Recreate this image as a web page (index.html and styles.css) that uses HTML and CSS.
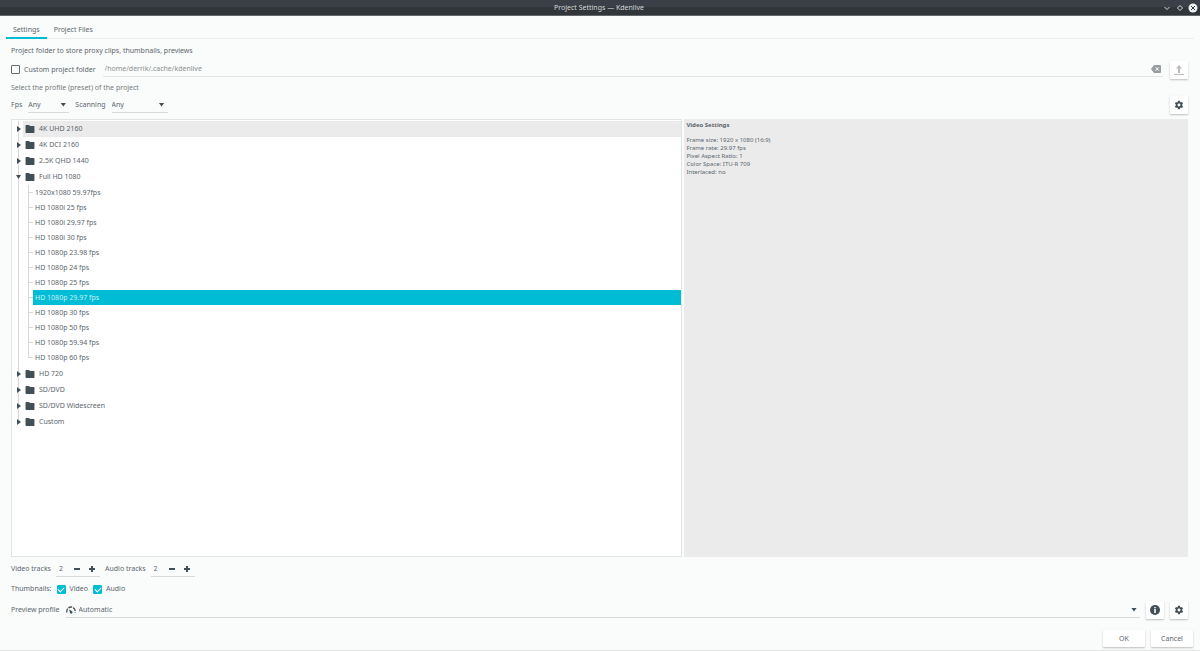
FILE: index.html
```html
<!DOCTYPE html>
<html lang="en">
<head>
    <meta charset="UTF-8">
    <meta name="viewport" content="width=device-width, initial-scale=1.0">
    <title>Project Settings — Kdenlive</title>
    <link rel="stylesheet" href="styles.css">
</head>
<body>
    <svg class="sprite" aria-hidden="true">
        <symbol id="folder" viewBox="0 0 10 9">
            <path d="M.5 0H4l1 1.200h4.500q.5 0 .5.5v6.800q0 .5-.5.5h-9Q0 9 0 8.500v-8Q0 0 .5 0z"/>
        </symbol>
        <symbol id="gear" viewBox="0 0 24 24">
            <path d="M19.400 13c.1-.3.1-.7.1-1s0-.7-.1-1l2.100-1.700c.2-.1.2-.4.1-.6l-2-3.500c-.1-.2-.4-.3-.6-.2l-2.500 1c-.5-.4-1.100-.7-1.700-1l-.4-2.600C14.400 2.200 14.200 2 14 2h-4c-.2 0-.5.2-.5.4L9.100 5c-.6.3-1.200.6-1.700 1l-2.500-1c-.2-.1-.5 0-.6.2l-2 3.500c-.1.2-.1.5.1.6L4.500 11c0 .3-.1.7-.1 1s0 .7.1 1l-2.100 1.700c-.2.100-.2.4-.1.6l2 3.500c.1.2.4.3.6.2l2.500-1c.5.4 1.100.7 1.700 1l.4 2.600c0 .2.200.4.5.4h4c.2 0 .5-.2.5-.4l.4-2.600c.6-.3 1.200-.6 1.700-1l2.500 1c.2.1.5 0 .6-.2l2-3.500c.1-.2.1-.5-.1-.6zM12 15.500a3.500 3.500 0 1 1 0-7 3.500 3.500 0 0 1 0 7z"/>
        </symbol>
    </svg>

    <header class="titlebar">
        <h1>Project Settings — Kdenlive</h1>
        <div class="window-buttons">
            <button type="button" aria-label="Minimize">
                <svg viewBox="0 0 10 10"><path class="line" d="M2.500 4 5 6.500 7.500 4"/></svg>
            </button>
            <button type="button" aria-label="Maximize">
                <svg viewBox="0 0 10 10"><path class="line" d="M5 2.500 7.500 5 5 7.500 2.500 5z"/></svg>
            </button>
            <button type="button" aria-label="Close">
                <svg viewBox="0 0 10 10"><circle cx="5" cy="5" r="4.500"/><path class="cross" d="m3 3 4 4m0-4L3 7"/></svg>
            </button>
        </div>
    </header>

    <nav class="tabs">
        <button type="button" class="tab active">Settings</button>
        <button type="button" class="tab">Project Files</button>
    </nav>

    <form class="settings">
        <p class="hint">Project folder to store proxy clips, thumbnails, previews</p>
        <div class="row folder-row">
            <label class="check"><input type="checkbox">Custom project folder</label>
            <div class="path-field">
                <input type="text" aria-label="Project folder path" value="/home/derrik/.cache/kdenlive" disabled>
                <button type="button" class="clear" aria-label="Clear" disabled>
                    <svg viewBox="0 0 10 8"><path d="M3 0h6q1 0 1 1v6q0 1-1 1H3L0 4z"/><path class="cut" d="m4.500 2.300 3.400 3.400m0-3.400L4.500 5.700"/></svg>
                </button>
            </div>
            <button type="button" class="tool" aria-label="Open folder" disabled>
                <svg viewBox="0 0 10 10"><path d="M5 0 2 3.500h2V8h2V3.500h2zM0 9h10v1H0z"/></svg>
            </button>
        </div>

        <p class="hint">Select the profile (preset) of the project</p>
        <div class="row filter-row">
            <label for="fps">Fps</label>
            <div class="combo combo-fps">
                <select id="fps"><option>Any</option></select>
            </div>
            <label for="scanning">Scanning</label>
            <div class="combo combo-scan">
                <select id="scanning"><option>Any</option></select>
            </div>
            <button type="button" class="tool push" aria-label="Manage profiles"><svg><use href="#gear"/></svg></button>
        </div>

        <div class="profiles">
            <div class="tree">
                <details class="hover">
                    <summary><span class="name"><svg><use href="#folder"/></svg>4K UHD 2160</span></summary>
                </details>
                <details>
                    <summary><span class="name"><svg><use href="#folder"/></svg>4K DCI 2160</span></summary>
                </details>
                <details>
                    <summary><span class="name"><svg><use href="#folder"/></svg>2.5K QHD 1440</span></summary>
                </details>
                <details open>
                    <summary><span class="name"><svg><use href="#folder"/></svg>Full HD 1080</span></summary>
                    <ul>
                        <li><button type="button">1920x1080 59.97fps</button></li>
                        <li><button type="button">HD 1080i 25 fps</button></li>
                        <li><button type="button">HD 1080i 29.97 fps</button></li>
                        <li><button type="button">HD 1080i 30 fps</button></li>
                        <li><button type="button">HD 1080p 23.98 fps</button></li>
                        <li><button type="button">HD 1080p 24 fps</button></li>
                        <li><button type="button">HD 1080p 25 fps</button></li>
                        <li><button type="button" class="selected">HD 1080p 29.97 fps</button></li>
                        <li><button type="button">HD 1080p 30 fps</button></li>
                        <li><button type="button">HD 1080p 50 fps</button></li>
                        <li><button type="button">HD 1080p 59.94 fps</button></li>
                        <li><button type="button">HD 1080p 60 fps</button></li>
                    </ul>
                </details>
                <details>
                    <summary><span class="name"><svg><use href="#folder"/></svg>HD 720</span></summary>
                </details>
                <details>
                    <summary><span class="name"><svg><use href="#folder"/></svg>SD/DVD</span></summary>
                </details>
                <details>
                    <summary><span class="name"><svg><use href="#folder"/></svg>SD/DVD Widescreen</span></summary>
                </details>
                <details>
                    <summary><span class="name"><svg><use href="#folder"/></svg>Custom</span></summary>
                </details>
            </div>
            <aside class="info">
                <h2>Video Settings</h2>
                <p>Frame size: 1920 x 1080 (16:9)</p>
                <p>Frame rate: 29.97 fps</p>
                <p>Pixel Aspect Ratio: 1</p>
                <p>Color Space: ITU-R 709</p>
                <p>Interlaced: no</p>
            </aside>
        </div>

        <div class="row tracks-row">
            <label for="video-tracks">Video tracks</label>
            <div class="spin">
                <input id="video-tracks" type="text" inputmode="numeric" value="2">
                <button type="button" aria-label="Fewer video tracks"><svg viewBox="0 0 6 6"><path d="M0 2h6v2H0z"/></svg></button>
                <button type="button" aria-label="More video tracks"><svg viewBox="0 0 6 6"><path d="M2 0h2v2h2v2H4v2H2V4H0V2h2z"/></svg></button>
            </div>
            <label for="audio-tracks">Audio tracks</label>
            <div class="spin">
                <input id="audio-tracks" type="text" inputmode="numeric" value="2">
                <button type="button" aria-label="Fewer audio tracks"><svg viewBox="0 0 6 6"><path d="M0 2h6v2H0z"/></svg></button>
                <button type="button" aria-label="More audio tracks"><svg viewBox="0 0 6 6"><path d="M2 0h2v2h2v2H4v2H2V4H0V2h2z"/></svg></button>
            </div>
        </div>

        <div class="row thumbs-row">
            <span>Thumbnails:</span>
            <label class="check"><input type="checkbox" checked>Video</label>
            <label class="check"><input type="checkbox" checked>Audio</label>
        </div>

        <div class="row preview-row">
            <label for="preview">Preview profile</label>
            <div class="combo combo-preview">
                <svg class="gauge" viewBox="0 0 10 8">
                    <path class="dial" d="M.8 6.500V5.200a4.200 4.200 0 0 1 8.400 0v1.300"/>
                    <path d="M3 3.200 6 5.200q1 .8.300 1.900-1 1.200-2.100.200z"/>
                </svg>
                <select id="preview"><option>Automatic</option></select>
            </div>
            <button type="button" class="tool" aria-label="Profile information">
                <svg viewBox="0 0 10 10"><circle cx="5" cy="5" r="5"/><path class="letter" d="M4 2h2v1.300H4zM4 4h2v4H4z"/></svg>
            </button>
            <button type="button" class="tool" aria-label="Manage preview profiles"><svg><use href="#gear"/></svg></button>
        </div>
    </form>

    <footer class="actions">
        <button type="button">OK</button>
        <button type="button">Cancel</button>
    </footer>
</body>
</html>
```
FILE: styles.css
```css
:root {
    --bg: #fafcfb;
    --text: #5c666d;
    --text-muted: #8b8f90;
    --icon: #434f56;
    --accent: #00bcd4;
    --border: #e2e3e3;
    --panel: #ebebeb;
    --font-size: 7px;
    --font-size-sm: 6px;
}

* {
    margin: 0;
    padding: 0;
    box-sizing: border-box;
}

body {
    display: flex;
    flex-direction: column;
    min-height: 100vh;
    background: var(--bg);
    border-bottom: 1px solid var(--border);
    color: var(--text);
    font-family: "Noto Sans", sans-serif;
    font-size: var(--font-size);
    line-height: 10px;
}

button,
input,
select {
    font: inherit;
    color: inherit;
    background: none;
    border: 0;
    outline: 0;
}

svg {
    display: block;
    fill: var(--icon);
}

.sprite {
    display: none;
}

/* Title bar */
.titlebar {
    display: grid;
    grid-template-columns: 1fr auto 1fr;
    align-items: center;
    height: 16px;
    padding-right: 2px;
    background: linear-gradient(#3b3f47 0, #3b3f47 7px, #31363a 7px);
    border-bottom: 1px solid #63676a;
    color: #d5d8da;
}

.titlebar h1 {
    grid-column: 2;
    font-size: var(--font-size);
    font-weight: 400;
}

.window-buttons {
    display: flex;
    justify-content: flex-end;
    gap: 3px;
}

.window-buttons svg {
    width: 10px;
    height: 10px;
    fill: #eff0f1;
}

.window-buttons .line {
    fill: none;
    stroke: #d5d8da;
}

.window-buttons .cross {
    stroke: #31363a;
}

/* Tabs */
.tabs {
    display: flex;
    height: 23px;
    margin: 0 6px;
    border-bottom: 1px solid #eceeed;
}

.tab {
    margin-bottom: -1px;
    padding: 6px 7px 0;
    border-bottom: 2px solid transparent;
}

.tab.active {
    border-color: var(--accent);
}

/* Settings page */
.settings {
    display: flex;
    flex: 1;
    flex-direction: column;
    padding: 6px 12px 0 11px;
}

.row {
    display: flex;
    align-items: center;
}

.hint {
    line-height: 12px;
}

.hint ~ .hint {
    color: #757a7c;
}

.check {
    display: flex;
    align-items: center;
    gap: 4px;
}

.check input {
    appearance: none;
    display: grid;
    place-items: center;
    width: 9px;
    height: 9px;
    border: 1px solid #636b70;
    border-radius: 1px;
}

.check input:checked {
    background: var(--accent);
    border-color: var(--accent);
}

.check input:checked::before {
    content: "";
    width: 5px;
    height: 3px;
    margin-bottom: 1px;
    border: solid #fff;
    border-width: 0 0 1px 1px;
    transform: rotate(-45deg);
}

.tool {
    display: grid;
    flex: none;
    place-items: center;
    width: 18px;
    height: 18px;
    background: #fff;
    border-radius: 1px;
    box-shadow: 0 1px 2px rgba(0, 0, 0, 0.25);
}

.tool svg {
    width: 10px;
    height: 10px;
}

.tool:disabled svg {
    fill: #b9bcbd;
}

.tool .letter {
    fill: #d5d8da;
}

.push {
    margin-left: auto;
}

.folder-row {
    gap: 7px;
    height: 25px;
}

.path-field {
    display: flex;
    flex: 1;
    align-items: center;
    height: 15px;
    padding: 0 2px;
    border-bottom: 1px solid var(--border);
}

.path-field input {
    flex: 1;
    color: var(--text-muted);
}

.clear svg {
    width: 10px;
    height: 8px;
    fill: #999da0;
}

.clear .cut {
    stroke: #fff;
}

/* Drop-downs */
.combo {
    position: relative;
    display: flex;
    align-items: center;
    height: 15px;
    border-bottom: 1px solid #d9d9d9;
}

.combo select {
    appearance: none;
    flex: 1;
    min-width: 0;
}

.combo::after {
    content: "";
    position: absolute;
    right: 3px;
    width: 6px;
    height: 4px;
    background: var(--icon);
    clip-path: polygon(0 0, 100% 0, 50% 100%);
    pointer-events: none;
}

.filter-row {
    gap: 6px;
    height: 22px;
}

.combo-fps {
    width: 41px;
}

.combo-scan {
    width: 56px;
}

/* Profile list */
.profiles {
    display: grid;
    flex: 1;
    grid-template-columns: 4fr 3fr;
    gap: 2px;
    margin-top: 3px;
}

.tree {
    padding-top: 1px;
    background: #fff;
    border: 1px solid var(--border);
}

.tree details {
    position: relative;
}

.tree details::before {
    content: "";
    position: absolute;
    top: 0;
    bottom: 0;
    left: 6px;
    border-left: 1px solid #d8d8d8;
}

.tree details:last-child::before {
    bottom: 8px;
}

.tree summary {
    position: relative;
    display: flex;
    align-items: center;
    height: 16px;
    padding-left: 5px;
    list-style: none;
}

.tree summary::before {
    content: "";
    width: 4px;
    height: 6px;
    margin-right: 2px;
    background: var(--icon);
    clip-path: polygon(0 0, 100% 50%, 0 100%);
}

.tree [open] > summary {
    padding-left: 4px;
}

.tree [open] > summary::before {
    width: 5px;
    height: 4px;
    clip-path: polygon(0 0, 100% 0, 50% 100%);
}

.tree .name {
    display: flex;
    flex: 1;
    align-items: center;
    gap: 4px;
    height: 16px;
    padding-left: 2px;
}

.tree .hover .name {
    background: var(--panel);
}

.name svg {
    width: 10px;
    height: 8px;
}

.tree ul {
    margin-left: 16px;
    padding-bottom: 1px;
    list-style: none;
}

.tree li {
    display: flex;
    align-items: center;
    height: 15px;
    background: linear-gradient(#d8d8d8, #d8d8d8) no-repeat 0 0 / 1px 100%;
}

.tree li:last-child {
    background-size: 1px 8px;
}

.tree li::before {
    content: "";
    width: 5px;
    border-top: 1px solid #d8d8d8;
}

.tree li button {
    flex: 1;
    height: 15px;
    padding-left: 2px;
    text-align: left;
}

.tree li .selected {
    background: var(--accent);
    color: #c9f1f6;
}

.info {
    padding: 2px;
    background: var(--panel);
    font-size: var(--font-size-sm);
    line-height: 8px;
}

.info h2 {
    margin-bottom: 7px;
    font-size: var(--font-size-sm);
    font-weight: 700;
}

/* Lower controls */
.spin {
    display: flex;
    align-items: center;
    width: 44px;
    height: 15px;
    border-bottom: 1px solid #d9d9d9;
}

.spin input {
    flex: 1;
    min-width: 0;
    padding-left: 3px;
}

.spin button {
    display: grid;
    place-items: center;
    width: 15px;
    height: 14px;
}

.spin svg {
    width: 6px;
    height: 6px;
}

.tracks-row {
    gap: 5px;
    height: 24px;
}

.thumbs-row {
    gap: 5px;
    height: 16px;
}

.preview-row {
    gap: 6px;
    height: 26px;
}

.combo-preview {
    flex: 1;
    gap: 3px;
}

.gauge {
    width: 10px;
    height: 8px;
}

.gauge .dial {
    fill: none;
    stroke: var(--icon);
    stroke-width: 1.3;
    stroke-dasharray: 4 1;
}

/* Dialog buttons */
.actions {
    display: flex;
    justify-content: flex-end;
    gap: 6px;
    padding: 7px 7px 3px;
}

.actions button {
    width: 42px;
    height: 17px;
    background: #fff;
    border-radius: 1px;
    box-shadow: 0 1px 2px rgba(0, 0, 0, 0.25);
}
```
